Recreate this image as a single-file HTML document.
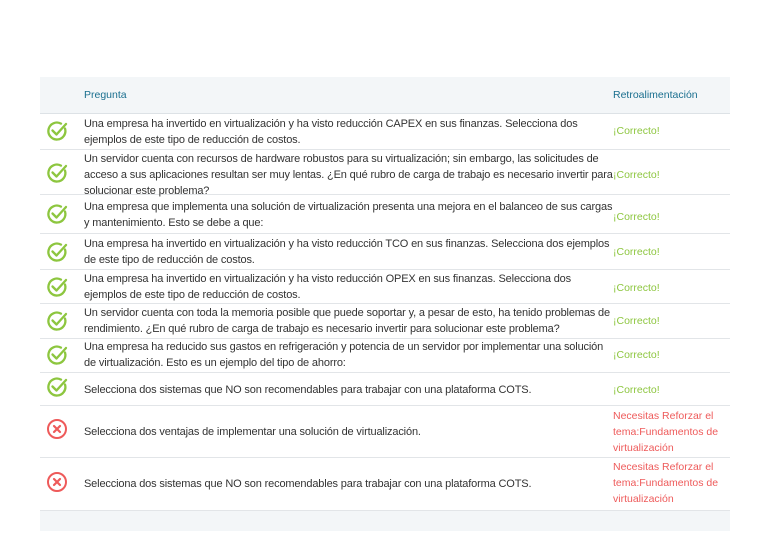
<!DOCTYPE html>
<html><head><meta charset="utf-8"><style>
body{margin:0;width:768px;height:543px;background:#fff;font-family:"Liberation Sans",sans-serif;position:relative;overflow:hidden}
.hd{position:absolute;left:40px;top:77px;width:690px;height:36px;background:#f3f6f8;border-bottom:1px solid #dde2e6}
.hd span{position:absolute;top:12px;font-size:10.5px;color:#1a6f8f}
.r{position:absolute;left:40px;width:690px;border-bottom:1px solid #e2e5e8}
.q{position:absolute;left:44px;width:532px;font-size:11px;line-height:16px;color:#333;letter-spacing:-0.15px}
.f{position:absolute;left:573px;width:115px;font-size:10.5px;line-height:16px}
.ok{color:#8dc63f}.bad{color:#ee5a5a}
svg{position:absolute;left:6px}
.ft{position:absolute;left:40px;top:511px;width:690px;height:20px;background:#f3f6f8}
</style></head><body>
<div class="hd"><span style="left:44px">Pregunta</span><span style="left:573px">Retroalimentación</span></div>

<div class="r" style="top:113px;height:36px"><svg width="22" height="22" style="top:7px" viewBox="0 0 22 22"><path d="M19 8.5A8.5 8.5 0 1 1 15 3.6" fill="none" stroke="#8dc63f" stroke-width="2.3" stroke-linecap="round"/><path d="M6.5 10.5l4 4L20 4" fill="none" stroke="#8dc63f" stroke-width="2.3" stroke-linecap="round" stroke-linejoin="round"/></svg><div class="q" style="top:3px">Una empresa ha invertido en virtualización y ha visto reducción CAPEX en sus finanzas. Selecciona dos ejemplos de este tipo de reducción de costos.</div><div class="f ok" style="top:10px">¡Correcto!</div></div>

<div class="r" style="top:150px;height:44px"><svg width="22" height="22" style="top:12px" viewBox="0 0 22 22"><path d="M19 8.5A8.5 8.5 0 1 1 15 3.6" fill="none" stroke="#8dc63f" stroke-width="2.3" stroke-linecap="round"/><path d="M6.5 10.5l4 4L20 4" fill="none" stroke="#8dc63f" stroke-width="2.3" stroke-linecap="round" stroke-linejoin="round"/></svg><div class="q" style="top:1px;width:540px">Un servidor cuenta con recursos de hardware robustos para su virtualización; sin embargo, las solicitudes de acceso a sus aplicaciones resultan ser muy lentas. ¿En qué rubro de carga de trabajo es necesario invertir para solucionar este problema?</div><div class="f ok" style="top:17px">¡Correcto!</div></div>

<div class="r" style="top:195px;height:38px"><svg width="22" height="22" style="top:8px" viewBox="0 0 22 22"><path d="M19 8.5A8.5 8.5 0 1 1 15 3.6" fill="none" stroke="#8dc63f" stroke-width="2.3" stroke-linecap="round"/><path d="M6.5 10.5l4 4L20 4" fill="none" stroke="#8dc63f" stroke-width="2.3" stroke-linecap="round" stroke-linejoin="round"/></svg><div class="q" style="top:4px">Una empresa que implementa una solución de virtualización presenta una mejora en el balanceo de sus cargas y mantenimiento. Esto se debe a que:</div><div class="f ok" style="top:14px">¡Correcto!</div></div>

<div class="r" style="top:234px;height:35px"><svg width="22" height="22" style="top:7px" viewBox="0 0 22 22"><path d="M19 8.5A8.5 8.5 0 1 1 15 3.6" fill="none" stroke="#8dc63f" stroke-width="2.3" stroke-linecap="round"/><path d="M6.5 10.5l4 4L20 4" fill="none" stroke="#8dc63f" stroke-width="2.3" stroke-linecap="round" stroke-linejoin="round"/></svg><div class="q" style="top:2px">Una empresa ha invertido en virtualización y ha visto reducción TCO en sus finanzas. Selecciona dos ejemplos de este tipo de reducción de costos.</div><div class="f ok" style="top:10px">¡Correcto!</div></div>

<div class="r" style="top:270px;height:33px"><svg width="22" height="22" style="top:6px" viewBox="0 0 22 22"><path d="M19 8.5A8.5 8.5 0 1 1 15 3.6" fill="none" stroke="#8dc63f" stroke-width="2.3" stroke-linecap="round"/><path d="M6.5 10.5l4 4L20 4" fill="none" stroke="#8dc63f" stroke-width="2.3" stroke-linecap="round" stroke-linejoin="round"/></svg><div class="q" style="top:1px">Una empresa ha invertido en virtualización y ha visto reducción OPEX en sus finanzas. Selecciona dos ejemplos de este tipo de reducción de costos.</div><div class="f ok" style="top:10px">¡Correcto!</div></div>

<div class="r" style="top:304px;height:34px"><svg width="22" height="22" style="top:6px" viewBox="0 0 22 22"><path d="M19 8.5A8.5 8.5 0 1 1 15 3.6" fill="none" stroke="#8dc63f" stroke-width="2.3" stroke-linecap="round"/><path d="M6.5 10.5l4 4L20 4" fill="none" stroke="#8dc63f" stroke-width="2.3" stroke-linecap="round" stroke-linejoin="round"/></svg><div class="q" style="top:1px;width:540px">Un servidor cuenta con toda la memoria posible que puede soportar y, a pesar de esto, ha tenido problemas de rendimiento. ¿En qué rubro de carga de trabajo es necesario invertir para solucionar este problema?</div><div class="f ok" style="top:9px">¡Correcto!</div></div>

<div class="r" style="top:339px;height:33px"><svg width="22" height="22" style="top:5px" viewBox="0 0 22 22"><path d="M19 8.5A8.5 8.5 0 1 1 15 3.6" fill="none" stroke="#8dc63f" stroke-width="2.3" stroke-linecap="round"/><path d="M6.5 10.5l4 4L20 4" fill="none" stroke="#8dc63f" stroke-width="2.3" stroke-linecap="round" stroke-linejoin="round"/></svg><div class="q" style="top:0px">Una empresa ha reducido sus gastos en refrigeración y potencia de un servidor por implementar una solución de virtualización. Esto es un ejemplo del tipo de ahorro:</div><div class="f ok" style="top:8px">¡Correcto!</div></div>

<div class="r" style="top:373px;height:32px"><svg width="22" height="22" style="top:3px" viewBox="0 0 22 22"><path d="M19 8.5A8.5 8.5 0 1 1 15 3.6" fill="none" stroke="#8dc63f" stroke-width="2.3" stroke-linecap="round"/><path d="M6.5 10.5l4 4L20 4" fill="none" stroke="#8dc63f" stroke-width="2.3" stroke-linecap="round" stroke-linejoin="round"/></svg><div class="q" style="top:9px">Selecciona dos sistemas que NO son recomendables para trabajar con una plataforma COTS.</div><div class="f ok" style="top:9px">¡Correcto!</div></div>

<div class="r" style="top:406px;height:51px"><svg width="22" height="22" style="top:12px" viewBox="0 0 22 22"><circle cx="11" cy="11" r="9" fill="none" stroke="#ee5a5a" stroke-width="2"/><path d="M8 8l6 6M14 8l-6 6" stroke="#ee5a5a" stroke-width="2.2" stroke-linecap="round"/></svg><div class="q" style="top:18px">Selecciona dos ventajas de implementar una solución de virtualización.</div><div class="f bad" style="top:2px">Necesitas Reforzar el tema:Fundamentos de virtualización</div></div>

<div class="r" style="top:458px;height:52px"><svg width="22" height="22" style="top:13px" viewBox="0 0 22 22"><circle cx="11" cy="11" r="9" fill="none" stroke="#ee5a5a" stroke-width="2"/><path d="M8 8l6 6M14 8l-6 6" stroke="#ee5a5a" stroke-width="2.2" stroke-linecap="round"/></svg><div class="q" style="top:18px">Selecciona dos sistemas que NO son recomendables para trabajar con una plataforma COTS.</div><div class="f bad" style="top:1px">Necesitas Reforzar el tema:Fundamentos de virtualización</div></div>

<div class="ft"></div>
</body></html>
